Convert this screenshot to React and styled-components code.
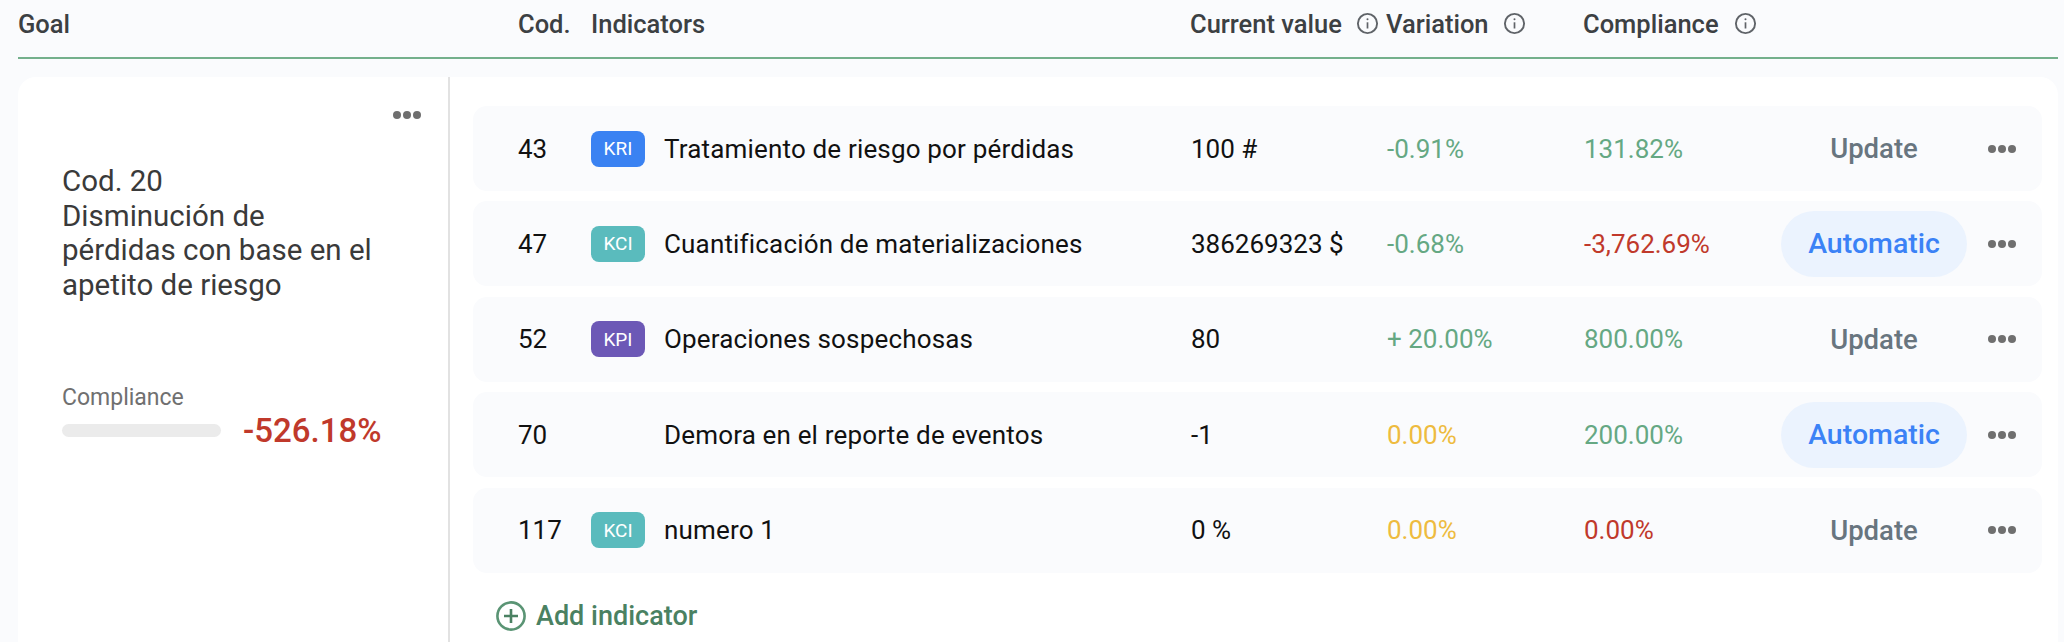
import React from 'react'
import styled, { createGlobalStyle } from 'styled-components'

const GlobalStyle = createGlobalStyle`
  html, body {
    margin: 0;
    height: 642px;
    overflow: hidden;
    background: #fafbfd;
    font-family: Roboto, "Liberation Sans", sans-serif;
  }
`

const Page = styled.div`
  padding: 0 6px 0 18px;
`

const HeaderRow = styled.div`
  display: grid;
  grid-template-columns: 500px 73px 599px 196px 197px 1fr;
  align-items: center;
  height: 47px;
  padding-bottom: 10px;
  border-bottom: 2px solid #74b08c;
  font-size: 25.5px;
  font-weight: 500;
  color: #3c4043;
`

const HeaderCell = styled.div`
  display: flex;
  align-items: center;
  white-space: nowrap;
  gap: ${p => p.$gap || 12}px;
`

const Card = styled.section`
  display: flex;
  margin-top: 18px;
  height: 600px;
  background: #fff;
  border-radius: 18px;
`

const GoalPanel = styled.aside`
  position: relative;
  box-sizing: border-box;
  width: 432px;
  flex: none;
  padding: 87px 0 0 44px;
  border-right: 2px solid #e2e2e2;
`

const GoalDots = styled.div`
  position: absolute;
  top: 28px;
  right: 26px;
  color: #6f6f6f;
`

const GoalTitle = styled.div`
  width: 315px;
  font-size: 29.5px;
  line-height: 34.6px;
  color: #3a3a3a;
`

const ComplianceLabel = styled.div`
  margin-top: 82px;
  font-size: 23px;
  line-height: 28px;
  color: #707070;
`

const ComplianceRow = styled.div`
  display: flex;
  align-items: center;
  gap: 22px;
  margin-top: -1px;
`

const Track = styled.div`
  width: 159px;
  height: 13px;
  border-radius: 7px;
  background: #ebebeb;
`

const ComplianceValue = styled.div`
  font-size: 33px;
  font-weight: 500;
  color: #c0392b;
`

const IndicatorPanel = styled.div`
  flex: 1;
  padding: 29px 16px 0 23px;
`

const Rows = styled.div`
  display: flex;
  flex-direction: column;
  gap: 10.4px;
`

const Row = styled.div`
  display: grid;
  grid-template-columns: 73px 73px 527px 196px 197px 197px 186px 1fr;
  align-items: center;
  box-sizing: border-box;
  height: 85px;
  padding-left: 45px;
  border-radius: 14px;
  background: #fafbfd;
  font-size: 26px;
  color: #111;
  white-space: nowrap;
`

const Name = styled.div`
  letter-spacing: 0.17px;
`

const Badge = styled.div`
  display: flex;
  align-items: center;
  justify-content: center;
  width: 54px;
  height: 36px;
  border-radius: 8px;
  background: ${p => p.$color};
  color: #fff;
  font-size: 19px;
`

const Percent = styled.div`
  color: ${p => p.$color};
`

const UpdateButton = styled.div`
  display: flex;
  align-items: center;
  justify-content: center;
  height: 66px;
  color: #68757f;
  font-size: 27.5px;
  font-weight: 500;
`

const AutomaticButton = styled(UpdateButton)`
  border-radius: 33px;
  background: #ebf3fe;
  color: #3b82f6;
  font-size: 28.5px;
`

const RowDots = styled.div`
  display: flex;
  justify-content: center;
  padding-right: 6px;
  color: #6f6f6f;
`

const AddIndicator = styled.div`
  display: flex;
  align-items: center;
  gap: 9px;
  margin: 27px 0 0 22px;
  font-size: 27px;
  font-weight: 500;
  color: #4a8162;
`

const GREEN = '#65a883'
const RED = '#c0392b'
const YELLOW = '#eebb3f'

const BADGES = {
  KRI: '#3a82f2',
  KCI: '#5abbbd',
  KPI: '#6c58b6'
}

const indicators = [
  { code: 43, type: 'KRI', name: 'Tratamiento de riesgo por pérdidas', value: '100 #', variation: '-0.91%', varColor: GREEN, compliance: '131.82%', compColor: GREEN },
  { code: 47, type: 'KCI', name: 'Cuantificación de materializaciones', value: '386269323 $', variation: '-0.68%', varColor: GREEN, compliance: '-3,762.69%', compColor: RED, automatic: true },
  { code: 52, type: 'KPI', name: 'Operaciones sospechosas', value: '80', variation: '+ 20.00%', varColor: GREEN, compliance: '800.00%', compColor: GREEN },
  { code: 70, name: 'Demora en el reporte de eventos', value: '-1', variation: '0.00%', varColor: YELLOW, compliance: '200.00%', compColor: GREEN, automatic: true },
  { code: 117, type: 'KCI', name: 'numero 1', value: '0 %', variation: '0.00%', varColor: YELLOW, compliance: '0.00%', compColor: RED }
]

const Dots = () => (
  <svg width="30" height="10" viewBox="0 0 30 10" fill="currentColor">
    <circle cx="5" cy="5" r="4" />
    <circle cx="15" cy="5" r="4" />
    <circle cx="25" cy="5" r="4" />
  </svg>
)

const InfoIcon = () => (
  <svg width="23" height="23" viewBox="0 0 23 23" fill="none" stroke="#5f6368">
    <circle cx="11.5" cy="11.5" r="9.6" strokeWidth="1.9" />
    <path d="M11.5 10.3v6.2" strokeWidth="1.7" />
    <circle cx="11.5" cy="7.2" r="1" fill="#5f6368" stroke="none" />
  </svg>
)

const PlusIcon = () => (
  <svg width="32" height="32" viewBox="0 0 32 32" fill="none" stroke="#5a9474" strokeWidth="2.6">
    <circle cx="16" cy="16" r="13.6" />
    <path d="M16 9v14M9 16h14" stroke="#4a8162" />
  </svg>
)

export default function App() {
  return (
    <Page>
      <GlobalStyle />
      <HeaderRow>
        <HeaderCell>Goal</HeaderCell>
        <HeaderCell>Cod.</HeaderCell>
        <HeaderCell>Indicators</HeaderCell>
        <HeaderCell $gap={14}>Current value <InfoIcon /></HeaderCell>
        <HeaderCell $gap={14}>Variation <InfoIcon /></HeaderCell>
        <HeaderCell $gap={15}>Compliance <InfoIcon /></HeaderCell>
      </HeaderRow>
      <Card>
        <GoalPanel>
          <GoalDots><Dots /></GoalDots>
          <GoalTitle>
            Cod. 20<br />
            Disminución de pérdidas con base en el apetito de riesgo
          </GoalTitle>
          <ComplianceLabel>Compliance</ComplianceLabel>
          <ComplianceRow>
            <Track />
            <ComplianceValue>-526.18%</ComplianceValue>
          </ComplianceRow>
        </GoalPanel>
        <IndicatorPanel>
          <Rows>
            {indicators.map(item => (
              <Row key={item.code}>
                <div>{item.code}</div>
                <div>{item.type && <Badge $color={BADGES[item.type]}>{item.type}</Badge>}</div>
                <Name>{item.name}</Name>
                <div>{item.value}</div>
                <Percent $color={item.varColor}>{item.variation}</Percent>
                <Percent $color={item.compColor}>{item.compliance}</Percent>
                {item.automatic
                  ? <AutomaticButton>Automatic</AutomaticButton>
                  : <UpdateButton>Update</UpdateButton>}
                <RowDots><Dots /></RowDots>
              </Row>
            ))}
          </Rows>
          <AddIndicator><PlusIcon /> Add indicator</AddIndicator>
        </IndicatorPanel>
      </Card>
    </Page>
  )
}
